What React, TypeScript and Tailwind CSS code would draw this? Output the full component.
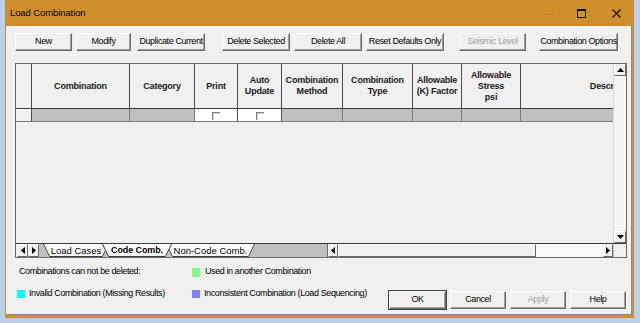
import React from 'react'

type BtnProps = {
  label: string
  className: string
  disabled?: boolean
  isDefault?: boolean
}

function Btn({ label, className, disabled, isDefault }: BtnProps) {
  return (
    <div
      className={`h-[18px] shrink-0 flex items-center justify-center bg-[#f0f0f0] border border-t-white border-l-white border-r-[#696969] border-b-[#696969] shadow-[inset_-1px_-1px_0_#a0a0a0] text-[9px] tracking-[-0.4px] whitespace-nowrap ${
        disabled ? 'text-[#a0a0a0]' : 'text-black'
      } ${isDefault ? 'outline outline-1 outline-[#404040]' : ''} ${className}`}
    >
      {label}
    </div>
  )
}

const topButtons: { label: string; cls: string; disabled?: boolean }[] = [
  { label: 'New', cls: 'w-[57px]' },
  { label: 'Modify', cls: 'ml-[4px] w-[55px]' },
  { label: 'Duplicate Current', cls: 'ml-[6px] w-[68px]' },
  { label: 'Delete Selected', cls: 'ml-[17px] w-[68px]' },
  { label: 'Delete All', cls: 'ml-[4px] w-[68px]' },
  { label: 'Reset Defaults Only', cls: 'ml-[4px] w-[78px]' },
  { label: 'Seismic Level', cls: 'ml-[15px] w-[67px]', disabled: true },
  { label: 'Combination Options', cls: 'ml-[13px] w-[79px]' },
]

type Column = { label: string; w: string; kind: 'gray' | 'check' | 'sel' }

const columns: Column[] = [
  { label: '', w: 'w-[16px]', kind: 'sel' },
  { label: 'Combination', w: 'w-[98px]', kind: 'gray' },
  { label: 'Category', w: 'w-[65px]', kind: 'gray' },
  { label: 'Print', w: 'w-[43px]', kind: 'check' },
  { label: 'Auto\nUpdate', w: 'w-[44px]', kind: 'check' },
  { label: 'Combination\nMethod', w: 'w-[61px]', kind: 'gray' },
  { label: 'Combination\nType', w: 'w-[70px]', kind: 'gray' },
  { label: 'Allowable\n(K) Factor', w: 'w-[49px]', kind: 'gray' },
  { label: 'Allowable\nStress\npsi', w: 'w-[59px]', kind: 'gray' },
  { label: 'Description', w: 'w-[186px]', kind: 'gray' },
]

function Arrow({ dir }: { dir: 'up' | 'down' | 'left' | 'right' }) {
  const pts = {
    up: '0,4 3.5,0 7,4',
    down: '0,0 3.5,4 7,0',
    left: '4,0 0,3.5 4,7',
    right: '0,0 4,3.5 0,7',
  }[dir]
  const horiz = dir === 'left' || dir === 'right'
  return (
    <svg width={horiz ? 4 : 7} height={horiz ? 7 : 4} viewBox={horiz ? '0 0 4 7' : '0 0 7 4'}>
      <polygon points={pts} fill="#000" />
    </svg>
  )
}

function ScrollBtn({ dir, className }: { dir: 'up' | 'down' | 'left' | 'right'; className: string }) {
  return (
    <div
      className={`shrink-0 flex items-center justify-center bg-[#f0f0f0] border border-t-white border-l-white border-r-[#696969] border-b-[#696969] ${className}`}
    >
      <Arrow dir={dir} />
    </div>
  )
}

function Tab({
  label,
  width,
  w,
  active,
  className,
}: {
  label: string
  width: number
  w: string
  active?: boolean
  className: string
}) {
  const h = 13
  return (
    <div className={`relative h-[13px] shrink-0 flex items-center justify-center ${w} ${active ? 'z-10' : ''} ${className}`}>
      <svg className="absolute inset-0" width={width} height={h} viewBox={`0 0 ${width} ${h}`}>
        <polygon points={`0,0 ${width},0 ${width - 6},${h} 6,${h}`} fill="#ffffff" />
        <polyline
          points={`0.5,0 6.5,${h - 0.5} ${width - 6.5},${h - 0.5} ${width - 0.5},0`}
          fill="none"
          stroke="#3a3a3a"
          strokeWidth="1"
        />
      </svg>
      <span
        className={`relative whitespace-nowrap leading-none text-black ${
          active ? 'font-bold text-[9px] tracking-[-0.1px]' : 'text-[9.5px]'
        }`}
      >
        {label}
      </span>
    </div>
  )
}

export default function App() {
  return (
    <div className="w-[640px] h-[323px] overflow-hidden bg-[#b9d1ea] pl-[5px] pr-[6px] pb-[5px] font-['Liberation_Sans',Arial,sans-serif]">
      <div className="h-full flex flex-col bg-[#d18e2c] border border-t-0 border-[#d18e2c]">
        {/* title bar */}
        <div className="h-[26px] shrink-0 flex items-center pl-[4px] pr-[12px]">
          <span className="text-[9.5px] tracking-[-0.1px] text-black">Load Combination</span>
          <div className="flex-1" />
          <svg width="9" height="9" viewBox="0 0 9 9" className="mr-[23px]">
            <line x1="0" y1="5.5" x2="8" y2="5.5" stroke="#a87a3c" strokeWidth="1" />
          </svg>
          <svg width="9" height="9" viewBox="0 0 9 9" className="mr-[26px]">
            <rect x="0.5" y="0.5" width="8" height="8" fill="none" stroke="#111" strokeWidth="1" />
            <line x1="0" y1="1.5" x2="9" y2="1.5" stroke="#111" strokeWidth="1" />
          </svg>
          <svg width="9" height="9" viewBox="0 0 9 9">
            <line x1="0.5" y1="0.5" x2="8.5" y2="8.5" stroke="#111" strokeWidth="1.1" />
            <line x1="8.5" y1="0.5" x2="0.5" y2="8.5" stroke="#111" strokeWidth="1.1" />
          </svg>
        </div>

        {/* content */}
        <div className="flex-1 flex flex-col bg-[#f0f0f0] mr-[1px] mb-[2px] border-r border-b border-[#8a8a8a] pt-[7px]">
          <div className="flex pl-[9px]">
            {topButtons.map((b) => (
              <Btn key={b.label} label={b.label} className={b.cls} disabled={b.disabled} />
            ))}
          </div>

          {/* grid */}
          <div className="mt-[12px] ml-[9px] w-[612px] flex flex-col border border-[#6b6b6b] bg-[#f0f0f0]">
            <div className="h-[180px] flex border-b border-[#3a3a3a]">
              <div className="w-[597px] overflow-hidden flex flex-col">
                <div className="h-[45px] shrink-0 flex border-b border-[#3a3a3a]">
                  {columns.map((c, i) => (
                    <div
                      key={i}
                      className={`${c.w} shrink-0 h-full flex items-center justify-center text-center whitespace-pre-line font-bold text-[9px] tracking-[-0.2px] leading-[11px] text-[#1a1a1a] bg-[#f0f0f0] border-r border-[#4d4d4d]`}
                    >
                      {c.label}
                    </div>
                  ))}
                </div>
                <div className="h-[13px] shrink-0 flex border-b border-[#7a7a7a]">
                  {columns.map((c, i) => (
                    <div
                      key={i}
                      className={`${c.w} shrink-0 h-full flex items-center justify-center border-r ${
                        c.kind === 'sel'
                          ? 'bg-[#f0f0f0] border-[#4d4d4d] shadow-[inset_0_1px_0_#ffffff]'
                          : c.kind === 'check'
                            ? 'bg-white border-[#4d4d4d]'
                            : 'bg-[#c0c0c0] border-[#7a7a7a]'
                      }`}
                    >
                      {c.kind === 'check' && (
                        <div className="w-[8px] h-[8px] mt-[2px] bg-white border-t border-l border-[#808080] shadow-[inset_1px_1px_0_#d4d4d4]" />
                      )}
                    </div>
                  ))}
                </div>
                <div className="flex-1" />
              </div>
              {/* vertical scrollbar */}
              <div className="w-[13px] flex flex-col bg-[#f5f5f5] border-l border-[#d8d8d8]">
                <ScrollBtn dir="up" className="h-[12px]" />
                <div className="flex-1" />
                <ScrollBtn dir="down" className="h-[12px]" />
              </div>
            </div>

            {/* tabs + horizontal scrollbar */}
            <div className="h-[13px] flex">
              <div className="w-[23px] flex pl-px">
                <ScrollBtn dir="left" className="w-[11px] h-full" />
                <ScrollBtn dir="right" className="w-[11px] h-full" />
              </div>
              <div className="w-[288px] flex bg-[#c0c0c0] pl-[4px]">
                <Tab label="Load Cases" width={66} w="w-[66px]" className="" />
                <Tab label="Code Comb." width={70} w="w-[70px]" active className="-ml-[7px]" />
                <Tab label="Non-Code Comb." width={89} w="w-[89px]" className="-ml-[6px]" />
              </div>
              <div className="w-[286px] flex border-l border-[#6b6b6b]">
                <ScrollBtn dir="left" className="w-[10px] h-full" />
                <div className="w-[198px] h-full bg-[#f0f0f0] border border-t-white border-l-white border-r-[#696969] border-b-[#696969]" />
                <div className="flex-1 bg-[#f8f8f8]" />
                <ScrollBtn dir="right" className="w-[10px] h-full" />
              </div>
              <div className="flex-1 bg-[#f0f0f0] border-l border-[#c8c8c8]" />
            </div>
          </div>

          {/* legend row 1 */}
          <div className="mt-[8px] h-[12px] flex items-center text-[9px] tracking-[-0.4px] text-black whitespace-nowrap">
            <div className="w-[186px] pl-[13px]">Combinations can not be deleted:</div>
            <div className="w-[8px] h-[9px] bg-[#80ff80]" />
            <div className="ml-[5px]">Used in another Combination</div>
          </div>

          {/* legend row 2 + buttons */}
          <div className="mt-[10px] flex items-start text-[9px] tracking-[-0.4px] text-black whitespace-nowrap">
            <div className="w-[186px] h-[12px] pl-[11px] flex items-center">
              <div className="w-[8px] h-[8px] bg-[#00ffff]" />
              <div className="ml-[4px]">Invalid Combination (Missing Results)</div>
            </div>
            <div className="w-[197px] h-[12px] flex items-center">
              <div className="w-[8px] h-[8px] bg-[#8080ff]" />
              <div className="ml-[4px]">Inconsistent Combination (Load Sequencing)</div>
            </div>
            <div className="mt-[3px] flex">
              <Btn label="OK" className="w-[57px]" isDefault />
              <Btn label="Cancel" className="ml-[4px] w-[56px]" />
              <Btn label="Apply" className="ml-[4px] w-[56px]" disabled />
              <Btn label="Help" className="ml-[4px] w-[56px]" />
            </div>
          </div>
        </div>
      </div>
    </div>
  )
}
